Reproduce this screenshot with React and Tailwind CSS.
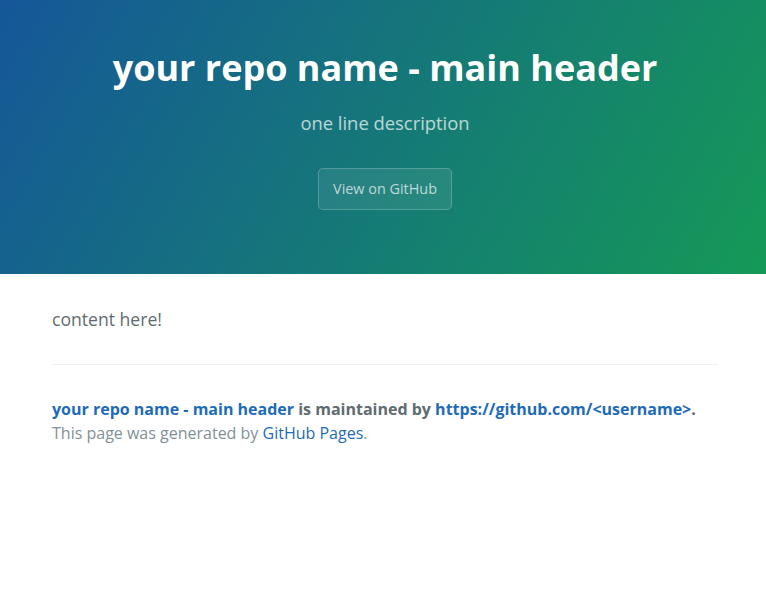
import React from "react";

// Cayman-style project page
export default function App() {
  return (
    <div className="min-h-[600px] bg-white font-['Open_Sans','Noto_Sans',sans-serif] leading-[1.5] text-[#606c71]">
      {/* ── Header ── */}
      <header className="bg-[linear-gradient(120deg,#155799,#159957)] text-center text-white pl-[68px] pr-16 pt-[41px] pb-12">
        <h1 className="text-[36px] font-bold leading-[1.5] mb-[2px] text-white">
          your repo name - main header
        </h1>
        <h2 className="text-[18.4px] font-normal leading-[1.5] opacity-70 mt-[14px] mb-[31px]">
          one line description
        </h2>
        <a
          href="#"
          className="inline-block mb-4 px-[14.4px] py-[9.6px] text-[14.4px] leading-[1.5] text-white/70 bg-white/[0.08] border border-white/20 rounded-[5px]"
        >
          View on GitHub
        </a>
      </header>

      {/* ── Main content ── */}
      <main className="pl-[52px] pr-[48px] pt-8 text-[17.6px]">
        <p>content here!</p>

        <footer className="mt-[31px] pt-8 border-t border-[#eff0f1] text-[16px]">
          <span className="block font-bold">
            <a href="#" className="text-[#1e6bb8]">your repo name - main header</a>
            {" "}is maintained by{" "}
            <a href="#" className="text-[#1e6bb8]">https://github.com/&lt;username&gt;</a>.
          </span>
          <span className="block text-[#819198]">
            This page was generated by <a href="#" className="text-[#1e6bb8]">GitHub Pages</a>.
          </span>
        </footer>
      </main>
    </div>
  );
}
